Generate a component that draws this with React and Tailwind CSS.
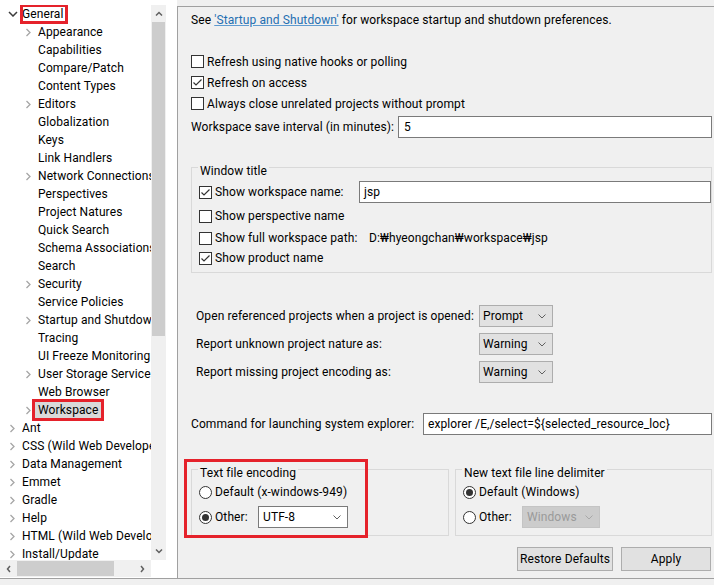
import React from "react";

const children = [
  ["Appearance", true],
  ["Capabilities"],
  ["Compare/Patch"],
  ["Content Types"],
  ["Editors", true],
  ["Globalization"],
  ["Keys"],
  ["Link Handlers"],
  ["Network Connections", true],
  ["Perspectives"],
  ["Project Natures"],
  ["Quick Search"],
  ["Schema Associations"],
  ["Search"],
  ["Security", true],
  ["Service Policies"],
  ["Startup and Shutdown", true],
  ["Tracing"],
  ["UI Freeze Monitoring"],
  ["User Storage Service", true],
  ["Web Browser"],
];

const roots = [
  "Ant",
  "CSS (Wild Web Developer)",
  "Data Management",
  "Emmet",
  "Gradle",
  "Help",
  "HTML (Wild Web Developer)",
  "Install/Update",
];

function Collapsed() {
  return (
    <svg width="6" height="9" viewBox="0 0 6 9" className="ml-[3px]">
      <path d="M1.5 1 L5 4.5 L1.5 8" fill="none" stroke="#a6a6a6" strokeWidth="1.3" />
    </svg>
  );
}

function Expanded() {
  return (
    <svg width="10" height="6" viewBox="0 0 10 6" className="ml-[2px]">
      <path d="M1 1 L5 5 L9 1" fill="none" stroke="#3c3c3c" strokeWidth="1.5" />
    </svg>
  );
}

function TreeRow({ indent, expander, children }) {
  return (
    <div className={`flex h-[18px] items-center whitespace-nowrap ${indent ? "pl-[22px]" : "pl-[6px]"}`}>
      <span className="flex w-[16px] shrink-0 items-center">{expander}</span>
      {children}
    </div>
  );
}

function ScrollArrow({ d, w = 8, h = 5 }) {
  return (
    <svg width={w} height={h} viewBox={`0 0 ${w} ${h}`}>
      <path d={d} fill="none" stroke="#606060" strokeWidth="1.5" />
    </svg>
  );
}

function Tree() {
  return (
    <div className="flex w-[177px] flex-col bg-white pt-[5px]">
      <div className="flex h-[555px]">
        <div className="w-[151px] overflow-hidden">
          <TreeRow expander={<Expanded />}>
            <span className="relative">
              General
              <span className="absolute -top-[2px] -bottom-[2px] -left-[2px] -right-[4px] border-[3px] border-[#e5222b]" />
            </span>
          </TreeRow>
          {children.map(([name, more]) => (
            <TreeRow key={name} indent expander={more ? <Collapsed /> : null}>
              {name}
            </TreeRow>
          ))}
          <TreeRow indent expander={<Collapsed />}>
            <span className="relative -ml-[3px] bg-[#d9d9d9] px-[3px]">
              Workspace
              <span className="absolute -inset-[3px] border-[3px] border-[#e5222b]" />
            </span>
          </TreeRow>
          {roots.map((name) => (
            <TreeRow key={name} expander={<Collapsed />}>
              {name}
            </TreeRow>
          ))}
        </div>
        <div className="flex w-[15px] flex-col bg-[#f0f0f0]">
          <div className="flex h-[17px] items-center justify-center">
            <ScrollArrow d="M1 4.5 L4 1.5 L7 4.5" />
          </div>
          <div className="mx-[1px] h-[314px] bg-[#cdcdcd]" />
          <div className="flex-1" />
          <div className="flex h-[17px] items-center justify-center">
            <ScrollArrow d="M1 0.5 L4 3.5 L7 0.5" />
          </div>
        </div>
      </div>
      <div className="flex h-[17px]">
        <div className="flex w-[151px] items-center bg-[#f0f0f0]">
          <div className="flex w-[17px] items-center justify-center">
            <ScrollArrow w={5} h={8} d="M4 1 L1.5 4 L4 7" />
          </div>
          <div className="my-[1px] h-[15px] w-[97px] bg-[#cdcdcd]" />
          <div className="flex-1" />
          <div className="flex w-[17px] items-center justify-center">
            <ScrollArrow w={5} h={8} d="M1 1 L3.5 4 L1 7" />
          </div>
        </div>
      </div>
    </div>
  );
}

function Check({ on }) {
  return (
    <span className="mr-[3px] flex h-[13px] w-[13px] shrink-0 items-center justify-center border border-[#333333] bg-white">
      {on && (
        <svg width="11" height="11" viewBox="0 0 11 11">
          <path d="M1.5 5.5 L4 8 L9.5 2.5" fill="none" stroke="#333333" strokeWidth="1.2" />
        </svg>
      )}
    </span>
  );
}

function Radio({ on }) {
  return (
    <span className="mr-[3px] flex h-[13px] w-[13px] shrink-0 items-center justify-center rounded-full border border-[#333333] bg-white">
      {on && <span className="h-[7px] w-[7px] rounded-full bg-[#333333]" />}
    </span>
  );
}

function ComboArrow({ color = "#606060" }) {
  return (
    <svg width="8" height="5" viewBox="0 0 8 5">
      <path d="M0.5 0.5 L4 4 L7.5 0.5" fill="none" stroke={color} strokeWidth="1" />
    </svg>
  );
}

function ReadCombo({ value }) {
  return (
    <div className="flex h-[22px] w-[74px] items-center justify-between border border-[#adadad] bg-[#e1e1e1] pl-[3px] pr-[6px]">
      <span>{value}</span>
      <ComboArrow />
    </div>
  );
}

function Group({ title, className, children }) {
  return (
    <div className={`relative border border-[#d9d9d9] pl-[7px] ${className}`}>
      <span className="absolute -top-[5px] left-[6px] bg-[#f0f0f0] px-[2px]">{title}</span>
      {children}
    </div>
  );
}

function Settings() {
  return (
    <div className="flex flex-1 pt-[6px]">
      <div className="relative flex-1 overflow-hidden border-l border-t border-[#a0a0a0] pl-[13px] pr-[2px]">
        <div className="mt-[5px] flex h-[16px] items-center whitespace-nowrap">
          See&nbsp;<span className="text-[#1f6fb2] underline decoration-[#5f9bd0]">'Startup and Shutdown'</span>&nbsp;for workspace startup and shutdown preferences.
        </div>

        <div className="mt-[23px]">
          <div className="flex h-[21px] items-center"><Check />Refresh using native hooks or polling</div>
          <div className="flex h-[21px] items-center"><Check on />Refresh on access</div>
          <div className="flex h-[21px] items-center"><Check />Always close unrelated projects without prompt</div>
        </div>

        <div className="mt-[2px] flex h-[22px] items-center">
          <span className="w-[207px] shrink-0">Workspace save interval (in minutes):</span>
          <div className="flex h-[22px] flex-1 items-center border border-[#7a7a7a] bg-white px-[5px]">5</div>
        </div>

        <Group title="Window title" className="mt-[29px] pt-[13px] pb-[5px]">
          <div className="flex h-[22px] items-center">
            <Check on />
            <span className="w-[144px] shrink-0">Show workspace name:</span>
            <div className="flex h-[22px] flex-1 items-center border border-[#7a7a7a] bg-white px-[4px]">jsp</div>
          </div>
          <div className="mt-[2px] flex h-[22px] items-center"><Check />Show perspective name</div>
          <div className="flex h-[22px] items-center">
            <Check />
            <span className="w-[154px] shrink-0">Show full workspace path:</span>
            <span>D:₩hyeongchan₩workspace₩jsp</span>
          </div>
          <div className="flex h-[18px] items-center"><Check on />Show product name</div>
        </Group>

        <div className="mt-[32px] flex flex-col gap-[6px] pl-[5px]">
          <div className="flex h-[22px] items-center">
            <span className="w-[283px] shrink-0">Open referenced projects when a project is opened:</span>
            <ReadCombo value="Prompt" />
          </div>
          <div className="flex h-[22px] items-center">
            <span className="w-[283px] shrink-0">Report unknown project nature as:</span>
            <ReadCombo value="Warning" />
          </div>
          <div className="flex h-[22px] items-center">
            <span className="w-[283px] shrink-0">Report missing project encoding as:</span>
            <ReadCombo value="Warning" />
          </div>
        </div>

        <div className="mt-[30px] flex h-[22px] items-center">
          <span className="w-[232px] shrink-0">Command for launching system explorer:</span>
          <div className="flex h-[22px] flex-1 items-center border border-[#7a7a7a] bg-white px-[4px] whitespace-nowrap">
            explorer /E,/select=${"{"}selected_resource_loc{"}"}
          </div>
        </div>

        <div className="mt-[34px] flex gap-[6px]">
          <Group title="Text file encoding" className="w-[258px] pt-[12px] pb-[6px]">
            <div className="flex h-[20px] items-center"><Radio />Default (x-windows-949)</div>
            <div className="mt-[3px] flex h-[24px] items-center">
              <Radio on />
              <span className="w-[43px] shrink-0">Other:</span>
              <div className="flex h-[22px] w-[90px] items-center justify-between border border-[#7a7a7a] bg-white pl-[4px] pr-[6px]">
                <span>UTF-8</span>
                <ComboArrow />
              </div>
            </div>
          </Group>
          <Group title="New text file line delimiter" className="flex-1 pt-[12px] pb-[6px]">
            <div className="flex h-[20px] items-center"><Radio on />Default (Windows)</div>
            <div className="mt-[3px] flex h-[24px] items-center">
              <Radio />
              <span className="w-[43px] shrink-0">Other:</span>
              <div className="flex h-[22px] w-[78px] items-center justify-between border border-[#c4c4c4] bg-[#cccccc] pl-[4px] pr-[6px] text-[#9a9a9a]">
                <span>Windows</span>
                <ComboArrow color="#a8a8a8" />
              </div>
            </div>
          </Group>
        </div>

        <div className="mt-[11px] mr-[1px] flex justify-end gap-[8px]">
          <button className="flex h-[24px] w-[96px] items-center justify-center border border-[#adadad] bg-[#e1e1e1]">Restore Defaults</button>
          <button className="flex h-[24px] w-[90px] items-center justify-center border border-[#adadad] bg-[#e1e1e1]">Apply</button>
        </div>

        <div className="absolute left-[6px] top-[452px] h-[79px] w-[184px] border-[3px] border-[#e5222b]" />
      </div>
    </div>
  );
}

export default function App() {
  return (
    <div className="h-[585px] w-[714px] overflow-hidden bg-[#f0f0f0] font-[family-name:Roboto,sans-serif] text-[12px] leading-[16px] tracking-[0.1px] text-black">
      <div className="flex h-[579px] border-b border-[#a0a0a0]">
        <Tree />
        <Settings />
      </div>
    </div>
  );
}
